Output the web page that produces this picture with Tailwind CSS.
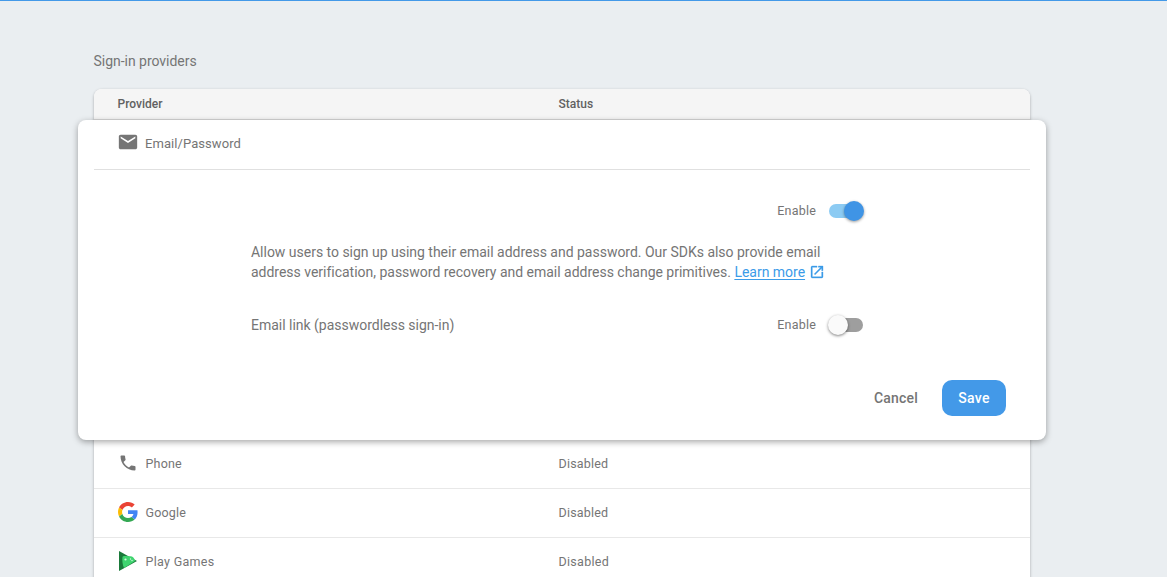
<!DOCTYPE html>
<html>
<head>
<meta charset="utf-8">
<script src="https://cdn.jsdelivr.net/npm/@tailwindcss/browser@4"></script>
</head>
<body class="m-0 h-[577px] overflow-hidden bg-[#eaeef1] font-['Roboto',sans-serif] text-[#757575] antialiased">
<div class="h-px bg-[#4399e8]"></div>
<main class="w-[936px] ml-[94px]">
  <h2 class="pt-[50px] h-[88px] -ml-[0.5px] text-[14px] tracking-[-0.03px] leading-[20px] font-normal text-[#757575]">Sign-in providers</h2>
  <section class="rounded-t-lg bg-white shadow-[0_1px_3px_rgba(0,0,0,0.3)]">
    <div class="h-[31px] flex items-center bg-[#f5f5f5] rounded-t-lg text-[12px] font-medium text-[#616161] border-b border-[#d6d6d6]">
      <div class="w-[464.5px] pl-[23.5px]">Provider</div>
      <div>Status</div>
    </div>
    <div class="relative z-10 -mx-4 h-[320px] bg-white rounded-lg shadow-[0_2px_6px_rgba(0,0,0,0.35)] px-4 flex flex-col">
      <div class="h-[50px] flex items-center border-b border-[#e0e0e0] pl-[23px] pb-px">
        <svg class="w-[22px] h-[22px] -mt-[4px] mr-[6px] shrink-0" viewBox="0 0 24 24" fill="#757575"><path d="M20 4H4c-1.100 0-2 .9-2 2v12c0 1.100.9 2 2 2h16c1.100 0 2-.9 2-2V6c0-1.100-.9-2-2-2zm0 4-8 5-8-5V6l8 5 8-5v2z"/></svg>
        <span class="text-[13px] tracking-[0.07px]">Email/Password</span>
      </div>
      <div class="pl-[157px] pr-[167px]">
        <div class="flex justify-end items-center h-[20px] mt-[31px]">
          <span class="text-[12.5px] tracking-[0.2px] mr-[13px]">Enable</span>
          <span class="relative block w-[34px] h-[14px] rounded-full bg-[#8ccbf3]">
            <span class="absolute -right-px -top-[3px] w-[20px] h-[20px] rounded-full bg-[#3f94e5] shadow-[0_1px_3px_rgba(0,0,0,0.4)]"></span>
          </span>
        </div>
        <p class="mt-[21px] w-[600px] text-[14px] leading-[20px] tracking-[-0.015px] text-[#757575]">Allow users to sign up using their email address and password. Our SDKs also provide email address verification, password recovery and email address change primitives. <a class="text-[#3b9be8] underline underline-offset-2">Learn more</a><svg class="inline-block w-[16px] h-[16px] ml-[4px] -mt-[2px]" viewBox="0 0 24 24" fill="#3b9be8" stroke="#3b9be8" stroke-width="0.5"><path d="M19 19H5V5h7V3H5a2 2 0 0 0-2 2v14a2 2 0 0 0 2 2h14c1.100 0 2-.9 2-2v-7h-2v7zM14 3v2h3.590l-9.830 9.830 1.410 1.410L19 6.410V10h2V3h-7z"/></svg></p>
        <div class="flex items-center justify-between h-[20px] mt-[33px]">
          <span class="text-[14px] tracking-[-0.015px]">Email link (passwordless sign-in)</span>
          <div class="flex items-center">
            <span class="text-[12.5px] tracking-[0.2px] mr-[13px]">Enable</span>
            <span class="relative block w-[34px] h-[14px] rounded-full bg-[#9e9e9e]">
              <span class="absolute -left-px -top-[3px] w-[20px] h-[20px] rounded-full bg-[#fafafa] shadow-[0_1px_3px_rgba(0,0,0,0.5)]"></span>
            </span>
          </div>
        </div>
      </div>
      <div class="flex justify-end items-center mt-[45px] pr-[24px]">
        <button class="text-[14px] font-medium tracking-[0.2px] text-[#757575] mr-[24px]">Cancel</button>
        <button class="w-[64px] h-[36px] rounded-[10px] bg-[#4399e8] text-white text-[14px] font-medium tracking-[0.3px]">Save</button>
      </div>
    </div>
    <div class="h-[49px] flex items-center border-b border-[#e8e8e8] text-[12.5px] tracking-[0.2px]">
      <div class="w-[464.5px] pl-[24px] flex items-center">
        <svg class="w-5 h-5 mr-[7.500px] -mt-[3px] shrink-0" viewBox="0 0 24 24" fill="#757575"><path d="M6.620 10.790c1.440 2.830 3.760 5.140 6.590 6.590l2.200-2.200c.27-.27.67-.36 1.020-.24 1.120.37 2.330.57 3.570.57.55 0 1 .45 1 1V20c0 .55-.45 1-1 1-9.390 0-17-7.610-17-17 0-.55.45-1 1-1h3.500c.55 0 1 .45 1 1 0 1.250.2 2.450.57 3.570.11.35.03.74-.25 1.020l-2.200 2.200z"/></svg>
        <span>Phone</span>
      </div>
      <div>Disabled</div>
    </div>
    <div class="h-[49px] flex items-center border-b border-[#e8e8e8] text-[12.5px] tracking-[0.2px]">
      <div class="w-[464.5px] pl-[24px] flex items-center">
        <svg class="w-5 h-5 mr-[7.500px] -mt-[2px] shrink-0" viewBox="0 0 48 48"><path fill="#EA4335" d="M24 9.500c3.540 0 6.710 1.220 9.210 3.600l6.850-6.850C35.900 2.380 30.470 0 24 0 14.620 0 6.510 5.380 2.560 13.220l7.980 6.190C12.430 13.720 17.740 9.500 24 9.500z"/><path fill="#4285F4" d="M46.980 24.550c0-1.570-.15-3.090-.38-4.550H24v9.020h12.940c-.58 2.960-2.260 5.480-4.780 7.180l7.730 6c4.510-4.180 7.090-10.360 7.090-17.650z"/><path fill="#FBBC05" d="M10.530 28.590c-.48-1.450-.76-2.990-.76-4.590s.27-3.140.76-4.590l-7.980-6.190C.92 16.460 0 20.120 0 24c0 3.880.92 7.540 2.560 10.780l7.970-6.190z"/><path fill="#34A853" d="M24 48c6.480 0 11.930-2.130 15.890-5.810l-7.730-6c-2.150 1.450-4.920 2.300-8.160 2.300-6.260 0-11.570-4.220-13.470-9.910l-7.980 6.190C6.510 42.620 14.620 48 24 48z"/></svg>
        <span>Google</span>
      </div>
      <div>Disabled</div>
    </div>
    <div class="h-[49px] flex items-center text-[12.5px] tracking-[0.3px]">
      <div class="w-[464.5px] pl-[24px] flex items-center">
        <svg class="w-5 h-5 mr-[7.500px] -mt-[3px] shrink-0" viewBox="0 0 20 20"><path fill="#1a7a3a" d="M1 0 L19 10 L1 20 Z"/><path fill="#3fd46f" d="M4.500 6 C5 5 6 4.800 7.500 5 L12 5.200 C14.500 5 16.500 7 17 10 L12.500 13 L6 17 C4.500 14 4 9 4.500 6 Z"/><circle cx="7.500" cy="8.500" r="1.100" fill="#d6f9df"/><circle cx="12.500" cy="8" r="0.700" fill="#d6f9df"/><circle cx="14" cy="9.500" r="0.700" fill="#d6f9df"/></svg>
        <span>Play Games</span>
      </div>
      <div>Disabled</div>
    </div>
  </section>
</main>
</body>
</html>
